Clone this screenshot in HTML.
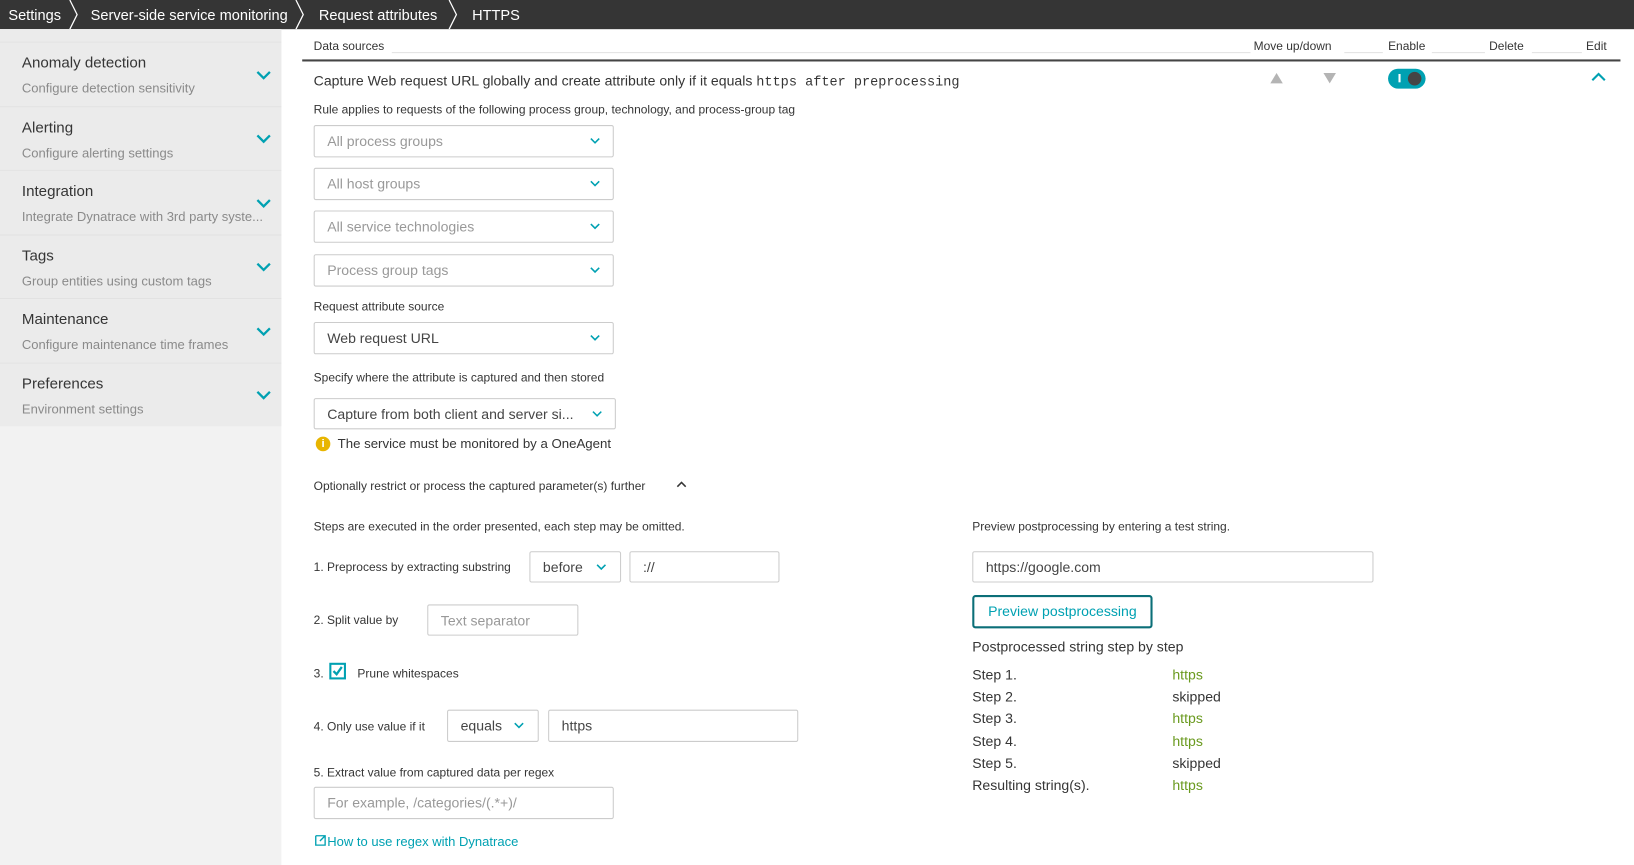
<!DOCTYPE html>
<html><head><meta charset="utf-8"><style>
html,body{margin:0;padding:0;width:1634px;height:865px;overflow:hidden;background:#fff}
#w{position:absolute;left:0;top:0;width:1568px;height:830px;transform:scale(1.04209);transform-origin:0 0;font-family:"Liberation Sans",sans-serif;color:#353535}
.a{position:absolute;white-space:nowrap}
.top{left:0;top:0;width:1568px;height:28px;background:#353535}
.bc{color:#fff;font-size:14px;top:6px}
.sep{top:0;width:14px;height:28px}
.side{left:0;top:28px;width:270px;height:802px;background:#f2f2f2}
.item{position:absolute;left:0;width:270px;background:#ebebeb;border-bottom:1px solid #e2e2e2}
.it{position:absolute;left:21px;font-size:14.5px;color:#353535}
.is{position:absolute;left:21px;font-size:12.5px;color:#8a8a8a}
.chev{position:absolute;left:246px;width:14px;height:10px}
.lbl{font-size:11.5px;color:#353535;margin-top:2px}
.inp{position:absolute;border:1px solid #ccc;border-radius:2px;background:#fff;box-sizing:border-box;font-size:13.5px;color:#454545}
.inp span{position:absolute;left:12px;top:7px}
.ph{color:#999}
.dd{position:absolute;width:10px;height:7px}
.tx{font-size:13.5px;color:#353535}
.g{color:#6a9a1f}
</style></head><body><div id="w">
<div class="a top"></div>
<div class="a bc" style="left:8px">Settings</div>
<svg class="a sep" style="left:64px" viewBox="0 0 14 28"><path d="M3 0 L10 14 L3 28" stroke="#fff" stroke-width="1.2" fill="none"/></svg>
<div class="a bc" style="left:87px">Server-side service monitoring</div>
<svg class="a sep" style="left:281px" viewBox="0 0 14 28"><path d="M3 0 L10 14 L3 28" stroke="#fff" stroke-width="1.2" fill="none"/></svg>
<div class="a bc" style="left:306px">Request attributes</div>
<svg class="a sep" style="left:428px" viewBox="0 0 14 28"><path d="M3 0 L10 14 L3 28" stroke="#fff" stroke-width="1.2" fill="none"/></svg>
<div class="a bc" style="left:453px">HTTPS</div>

<div class="a side">
<div class="item" style="top:0;height:12px"></div>
<div class="item" style="top:13px;height:61px"><div class="it" style="top:12px">Anomaly detection</div><div class="is" style="top:37px">Configure detection sensitivity</div></div>
<div class="item" style="top:75px;height:60px"><div class="it" style="top:12px">Alerting</div><div class="is" style="top:37px">Configure alerting settings</div></div>
<div class="item" style="top:136px;height:61px"><div class="it" style="top:12px">Integration</div><div class="is" style="top:37px">Integrate Dynatrace with 3rd party syste...</div></div>
<div class="item" style="top:198px;height:60px"><div class="it" style="top:12px">Tags</div><div class="is" style="top:37px">Group entities using custom tags</div></div>
<div class="item" style="top:259px;height:61px"><div class="it" style="top:12px">Maintenance</div><div class="is" style="top:37px">Configure maintenance time frames</div></div>
<div class="item" style="top:321px;height:60px;border-bottom:none"><div class="it" style="top:12px">Preferences</div><div class="is" style="top:37px">Environment settings</div></div>
</div>
<svg class="a chev" style="top:67px" viewBox="0 0 14 10"><path d="M1 2 L7 8 L13 2" stroke="#00a1b2" stroke-width="2.2" fill="none"/></svg>
<svg class="a chev" style="top:128px" viewBox="0 0 14 10"><path d="M1 2 L7 8 L13 2" stroke="#00a1b2" stroke-width="2.2" fill="none"/></svg>
<svg class="a chev" style="top:190px" viewBox="0 0 14 10"><path d="M1 2 L7 8 L13 2" stroke="#00a1b2" stroke-width="2.2" fill="none"/></svg>
<svg class="a chev" style="top:251px" viewBox="0 0 14 10"><path d="M1 2 L7 8 L13 2" stroke="#00a1b2" stroke-width="2.2" fill="none"/></svg>
<svg class="a chev" style="top:313px" viewBox="0 0 14 10"><path d="M1 2 L7 8 L13 2" stroke="#00a1b2" stroke-width="2.2" fill="none"/></svg>
<svg class="a chev" style="top:374px" viewBox="0 0 14 10"><path d="M1 2 L7 8 L13 2" stroke="#00a1b2" stroke-width="2.2" fill="none"/></svg>

<div class="a lbl" style="left:301px;top:37px">Data sources</div>
<div class="a" style="left:376px;top:50px;width:824px;height:1px;background:#e2e2e2"></div>
<div class="a lbl" style="left:1203px;top:37px">Move up/down</div>
<div class="a" style="left:1290px;top:50px;width:37px;height:1px;background:#e2e2e2"></div>
<div class="a lbl" style="left:1332px;top:37px">Enable</div>
<div class="a" style="left:1374px;top:50px;width:51px;height:1px;background:#e2e2e2"></div>
<div class="a lbl" style="left:1429px;top:37px">Delete</div>
<div class="a" style="left:1470px;top:50px;width:48px;height:1px;background:#e2e2e2"></div>
<div class="a lbl" style="left:1522px;top:37px">Edit</div>
<div class="a" style="left:290px;top:57px;width:1265px;height:2px;background:#454545"></div>

<div class="a" style="left:301px;top:70px;font-size:13.5px">Capture Web request URL globally and create attribute only if it equals <span style="font-family:'Liberation Mono',monospace;font-size:13px">https after preprocessing</span></div>
<svg class="a" style="left:1218px;top:69px" width="14" height="12"><path d="M7 1 L13 11 L1 11Z" fill="#b4b4b4"/></svg>
<svg class="a" style="left:1269px;top:69px" width="14" height="12"><path d="M1 1 L13 1 L7 11Z" fill="#b4b4b4"/></svg>
<div class="a" style="left:1332px;top:66px;width:36px;height:19px;border-radius:10px;background:#00a1b2"></div>
<div class="a" style="left:1342px;top:71px;width:1.5px;height:8px;background:#fff"></div>
<div class="a" style="left:1351px;top:69px;width:13px;height:13px;border-radius:50%;background:#454545"></div>
<svg class="a" style="left:1526px;top:69px" width="16" height="10"><path d="M2 8 L8 2 L14 8" stroke="#00a1b2" stroke-width="2" fill="none"/></svg>

<div class="a lbl" style="left:301px;top:98px">Rule applies to requests of the following process group, technology, and process-group tag</div>

<div class="inp" style="left:301px;top:120px;width:288px;height:31px"><span class="ph">All process groups</span></div>
<div class="inp" style="left:301px;top:161px;width:288px;height:31px"><span class="ph">All host groups</span></div>
<div class="inp" style="left:301px;top:202px;width:288px;height:31px"><span class="ph">All service technologies</span></div>
<div class="inp" style="left:301px;top:244px;width:288px;height:31px"><span class="ph">Process group tags</span></div>
<div class="a lbl" style="left:301px;top:287px">Request attribute source</div>
<div class="inp" style="left:301px;top:309px;width:288px;height:31px"><span>Web request URL</span></div>
<div class="a lbl" style="left:301px;top:355px">Specify where the attribute is captured and then stored</div>
<div class="inp" style="left:301px;top:382px;width:290px;height:30px"><span>Capture from both client and server si...</span></div>
<svg class="dd" style="left:566px;top:132px" viewBox="0 0 10 7"><path d="M1 1 L5 5 L9 1" stroke="#00a1b2" stroke-width="1.5" fill="none"/></svg>
<svg class="dd" style="left:566px;top:173px" viewBox="0 0 10 7"><path d="M1 1 L5 5 L9 1" stroke="#00a1b2" stroke-width="1.5" fill="none"/></svg>
<svg class="dd" style="left:566px;top:214px" viewBox="0 0 10 7"><path d="M1 1 L5 5 L9 1" stroke="#00a1b2" stroke-width="1.5" fill="none"/></svg>
<svg class="dd" style="left:566px;top:256px" viewBox="0 0 10 7"><path d="M1 1 L5 5 L9 1" stroke="#00a1b2" stroke-width="1.5" fill="none"/></svg>
<svg class="dd" style="left:566px;top:321px" viewBox="0 0 10 7"><path d="M1 1 L5 5 L9 1" stroke="#00a1b2" stroke-width="1.5" fill="none"/></svg>
<svg class="dd" style="left:568px;top:394px" viewBox="0 0 10 7"><path d="M1 1 L5 5 L9 1" stroke="#00a1b2" stroke-width="1.5" fill="none"/></svg>

<div class="a" style="left:303px;top:419px;width:14px;height:14px;border-radius:50%;background:#e8b500;color:#fff;font-size:11px;font-weight:bold;text-align:center;line-height:14px">i</div>
<div class="a" style="left:324px;top:419px;font-size:12.7px">The service must be monitored by a OneAgent</div>

<div class="a lbl" style="left:301px;top:459px">Optionally restrict or process the captured parameter(s) further</div>
<svg class="a" style="left:648px;top:461px" width="12" height="8"><path d="M2 6 L6 2 L10 6" stroke="#353535" stroke-width="1.5" fill="none"/></svg>

<div class="a lbl" style="left:301px;top:498px">Steps are executed in the order presented, each step may be omitted.</div>
<div class="a lbl" style="left:301px;top:537px">1. Preprocess by extracting substring</div>
<div class="inp" style="left:508px;top:529px;width:88px;height:30px"><span>before</span></div>
<svg class="dd" style="left:572px;top:541px" viewBox="0 0 10 7"><path d="M1 1 L5 5 L9 1" stroke="#00a1b2" stroke-width="1.5" fill="none"/></svg>
<div class="inp" style="left:604px;top:529px;width:144px;height:30px"><span>://</span></div>

<div class="a lbl" style="left:301px;top:588px">2. Split value by</div>
<div class="inp" style="left:410px;top:580px;width:145px;height:30px"><span class="ph">Text separator</span></div>

<div class="a lbl" style="left:301px;top:639px">3.</div>
<div class="a" style="left:316px;top:636px;width:16px;height:16px;border:2px solid #00a1b2;box-sizing:border-box"></div>
<svg class="a" style="left:318px;top:638px" width="12" height="12"><path d="M2 6 L5 9 L10 2" stroke="#00a1b2" stroke-width="2.2" fill="none"/></svg>
<div class="a lbl" style="left:343px;top:639px">Prune whitespaces</div>

<div class="a lbl" style="left:301px;top:690px">4. Only use value if it</div>
<div class="inp" style="left:429px;top:681px;width:88px;height:31px"><span>equals</span></div>
<svg class="dd" style="left:493px;top:693px" viewBox="0 0 10 7"><path d="M1 1 L5 5 L9 1" stroke="#00a1b2" stroke-width="1.5" fill="none"/></svg>
<div class="inp" style="left:526px;top:681px;width:240px;height:31px"><span>https</span></div>

<div class="a lbl" style="left:301px;top:734px">5. Extract value from captured data per regex</div>
<div class="inp" style="left:301px;top:755px;width:288px;height:31px"><span class="ph">For example, /categories/(.*+)/</span></div>
<svg class="a" style="left:302px;top:801px" width="11" height="11"><path d="M1 1 H6 M1 1 V10 H10 V5" stroke="#00a1b2" stroke-width="1.3" fill="none"/><path d="M5 6 L10 1 M6 1 H10 V5" stroke="#00a1b2" stroke-width="1.3" fill="none"/></svg>
<div class="a" style="left:314px;top:801px;font-size:12.5px;color:#00a1b2">How to use regex with Dynatrace</div>

<div class="a lbl" style="left:933px;top:498px">Preview postprocessing by entering a test string.</div>
<div class="inp" style="left:933px;top:529px;width:385px;height:30px"><span>https://google.com</span></div>
<div class="a" style="left:933px;top:571px;width:173px;height:32px;border:2px solid #0b6f78;border-radius:3px;box-sizing:border-box;color:#00a1b2;font-size:13.5px;text-align:center;line-height:28px">Preview postprocessing</div>
<div class="a tx" style="left:933px;top:613px">Postprocessed string step by step</div>
<div class="a tx" style="left:933px;top:637px;line-height:21.2px">Step 1.<br>Step 2.<br>Step 3.<br>Step 4.<br>Step 5.<br>Resulting string(s).</div>
<div class="a tx" style="left:1125px;top:637px;line-height:21.2px"><span class="g">https</span><br>skipped<br><span class="g">https</span><br><span class="g">https</span><br>skipped<br><span class="g">https</span></div>
</div></body></html>
